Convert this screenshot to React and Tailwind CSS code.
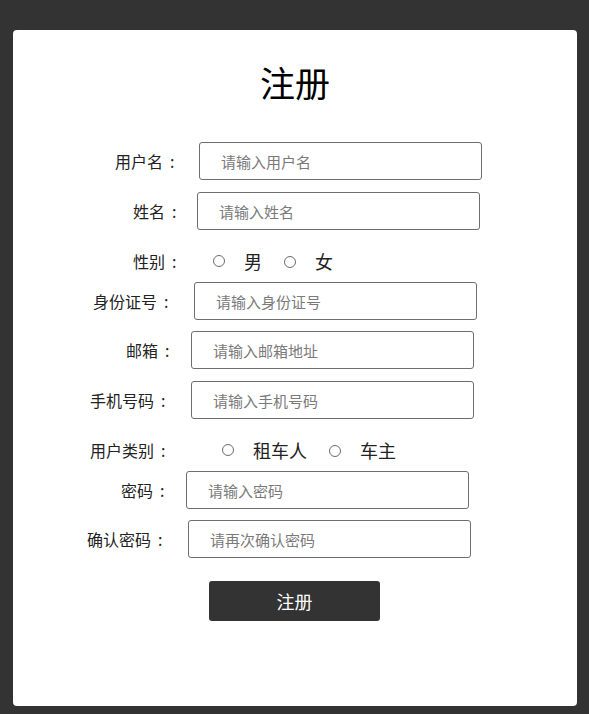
import React from "react";

const font = { fontFamily: '"Noto Sans CJK SC", "Noto Sans", sans-serif' };

function Radio() {
  return <span className="inline-block w-[12px] h-[12px] rounded-full border border-[#6b6b6b] bg-white shrink-0" />;
}

function Label({ text }) {
  return (
    <>
      {text}
      <span className="ml-[7px]">:</span>
    </>
  );
}

function InputRow({ mt, labelBox, labelPad, label, placeholder, type = "text" }) {
  return (
    <div className={`flex items-center ${mt}`}>
      <div className={`${labelBox} ${labelPad} shrink-0 text-[16px] text-[#222]`}>
        <Label text={label} />
      </div>
      <input
        type={type}
        placeholder={placeholder}
        className="w-[283px] h-[38px] border border-[#6e6e6e] rounded-[3px] pl-[21px] text-[15px] text-[#333] placeholder:text-[#7a7a7a] outline-none bg-white"
        style={font}
      />
    </div>
  );
}

export default function App() {
  return (
    <div className="min-h-screen bg-[#333333] pt-[30px] pb-[8px]" style={font}>
      <div className="ml-[13px] w-[564px] h-[676px] bg-white rounded-[4px] flex flex-col">
        <div className="mt-[28px] h-[48px] leading-[48px] text-center text-[35px] text-black">注册</div>

        <InputRow mt="mt-[36px]" labelBox="w-[186px]" labelPad="pl-[102px]" label="用户名" placeholder="请输入用户名" />
        <InputRow mt="mt-[12px]" labelBox="w-[184px]" labelPad="pl-[120px]" label="姓名" placeholder="请输入姓名" />

        <div className="flex items-center mt-[12px] h-[38px]">
          <div className="w-[200px] pl-[120px] shrink-0 text-[16px] text-[#222]">
            <Label text="性别" />
          </div>
          <Radio />
          <span className="ml-[19px] text-[18px] text-[#222]">男</span>
          <span className="ml-[22px]"><Radio /></span>
          <span className="ml-[19px] text-[18px] text-[#222]">女</span>
        </div>

        <InputRow mt="mt-[2px]" labelBox="w-[181px]" labelPad="pl-[80px]" label="身份证号" placeholder="请输入身份证号" />
        <InputRow mt="mt-[11px]" labelBox="w-[178px]" labelPad="pl-[113px]" label="邮箱" placeholder="请输入邮箱地址" />
        <InputRow mt="mt-[12px]" labelBox="w-[178px]" labelPad="pl-[77px]" label="手机号码" placeholder="请输入手机号码" />

        <div className="flex items-center mt-[12px] h-[38px]">
          <div className="w-[209px] pl-[77px] shrink-0 text-[16px] text-[#222]">
            <Label text="用户类别" />
          </div>
          <Radio />
          <span className="ml-[19px] text-[18px] text-[#222]">租车人</span>
          <span className="ml-[22px]"><Radio /></span>
          <span className="ml-[19px] text-[18px] text-[#222]">车主</span>
        </div>

        <InputRow mt="mt-[2px]" labelBox="w-[173px]" labelPad="pl-[108px]" label="密码" placeholder="请输入密码" type="password" />
        <InputRow mt="mt-[11px]" labelBox="w-[175px]" labelPad="pl-[74px]" label="确认密码" placeholder="请再次确认密码" type="password" />

        <div className="mt-[23px] pl-[196px]">
          <button className="w-[171px] h-[40px] bg-[#333333] text-white text-[18px] rounded-[3px]" style={font}>
            注册
          </button>
        </div>
      </div>
    </div>
  );
}
